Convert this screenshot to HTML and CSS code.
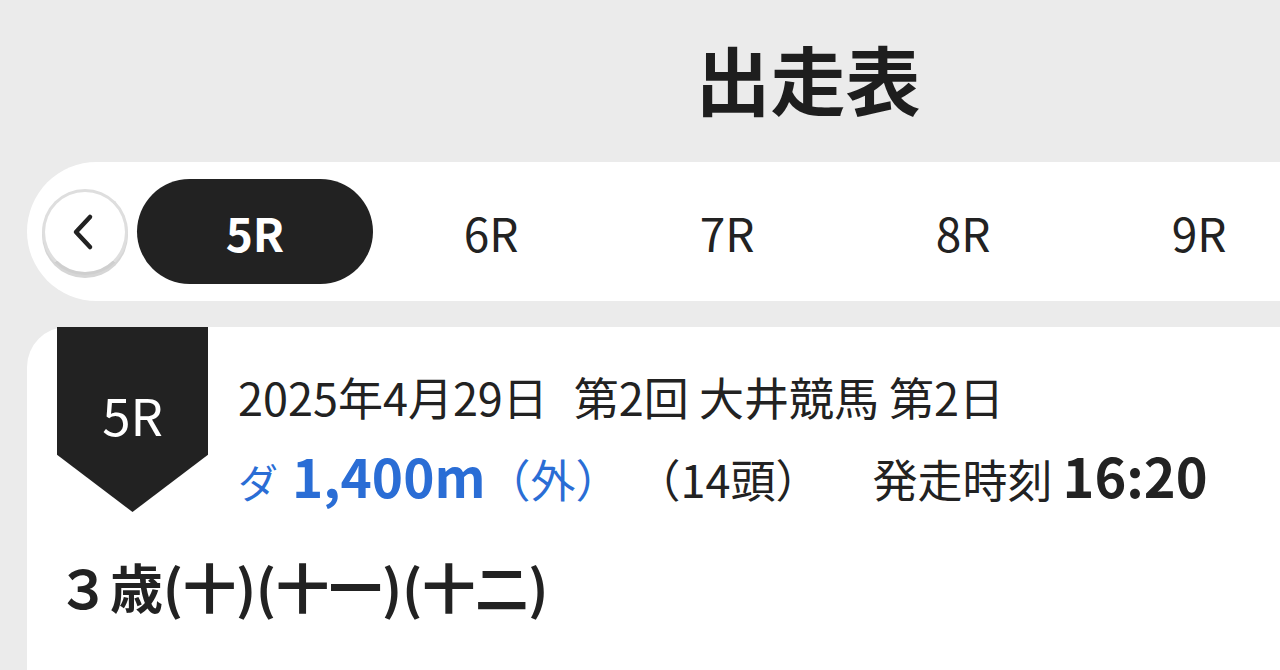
FILE: index.html
```html
<!DOCTYPE html>
<html lang="ja">
<head>
<meta charset="utf-8">
<link rel="stylesheet" href="styles.css">
</head>
<body>
<div class="page">
  <header class="header"><h1 class="title">出走表</h1></header>
  <nav class="race-nav">
    <button class="back" aria-label="前へ">
      <svg width="30" height="40" viewBox="0 0 30 40"><path d="M22 5 L8 20 L22 35" fill="none" stroke="#222" stroke-width="4.5" stroke-linecap="round" stroke-linejoin="round"/></svg>
    </button>
    <div class="tab active">5R</div>
    <div class="tab">6R</div>
    <div class="tab">7R</div>
    <div class="tab">8R</div>
    <div class="tab">9R</div>
  </nav>
  <section class="card">
    <div class="card-top">
      <div class="badge"><span>5R</span></div>
      <div class="info">
        <div class="line1"><span>2025年4月29日</span><span class="kai">第2回 大井競馬 第2日</span></div>
        <div class="line2">
          <span class="course"><span class="surface">ダ</span> <b class="dist">1,400m</b><span class="inout">（外）</span></span>
          <span class="heads">（14頭）</span>
          <span class="start">発走時刻 <b class="time">16:20</b></span>
        </div>
      </div>
    </div>
    <div class="cond">３歳(十)(十一)(十二)</div>
  </section>
</div>
</body>
</html>
```

FILE: styles.css
```css
* { box-sizing: border-box; }
html, body { margin: 0; padding: 0; }
body {
  background: #ebebeb;
  font-family: "Noto Sans CJK JP", "Noto Sans", sans-serif;
  color: #222;
  width: 1280px;
  height: 670px;
  overflow: hidden;
}
.header {
  height: 162px;
  display: flex;
  align-items: center;
  justify-content: center;
  padding-left: 336px;
}
.title {
  margin: 0;
  font-size: 75px;
  font-weight: 700;
  line-height: 1;
  color: #1e1e1e;
  transform: translateY(-4px);
}
.race-nav {
  margin-left: 27px;
  height: 139px;
  background: #fff;
  border-radius: 70px 0 0 70px;
  display: flex;
  align-items: center;
  padding-left: 15px;
  overflow: hidden;
  white-space: nowrap;
}
.back {
  flex: none;
  width: 86px;
  height: 86px;
  border-radius: 50%;
  border: 3px solid #dedede;
  border-bottom-color: #cfcfcf;
  background: #fff;
  box-shadow: 0 3px 0 #d6d6d6;
  display: flex;
  align-items: center;
  justify-content: center;
  padding: 0 4px 0 0;
  margin-right: 9px;
}
.tab {
  flex: none;
  width: 236px;
  height: 105px;
  display: flex;
  align-items: center;
  justify-content: center;
  font-size: 46px;
  font-weight: 400;
  color: #222;
}
.tab.active {
  background: #222;
  color: #fff;
  font-weight: 700;
  border-radius: 53px;
}
.card {
  margin-top: 26px;
  margin-left: 27px;
  height: 343px;
  background: #fff;
  border-radius: 40px 0 0 0;
  padding-left: 30px;
}
.card-top {
  display: flex;
  gap: 30px;
}
.badge {
  flex: none;
  width: 151px;
  height: 185px;
  background: #222;
  color: #fff;
  clip-path: polygon(0 0, 100% 0, 100% 69%, 50% 100%, 0 69%);
  display: flex;
  justify-content: center;
  padding-top: 62px;
  font-size: 51px;
  line-height: 1;
}
.info {
  padding-top: 40px;
}
.line1 {
  font-size: 45px;
  line-height: 60px;
  color: #222;
}
.kai { margin-left: 26px; }
.line2 {
  margin-top: 18px;
  display: flex;
  align-items: baseline;
  font-size: 45px;
  line-height: 60px;
}
.course { color: #2a6dd5; }
.surface { font-size: 40px; }
.dist { font-size: 53px; font-weight: 700; margin-left: 4px; }
.inout { font-size: 45px; }
.heads { margin-left: 15px; }
.start { margin-left: 52px; }
.time { font-size: 54px; font-weight: 700; }
.cond {
  margin-top: 44px;
  margin-left: 0;
  font-size: 53px;
  font-weight: 700;
  line-height: 60px;
}
```
